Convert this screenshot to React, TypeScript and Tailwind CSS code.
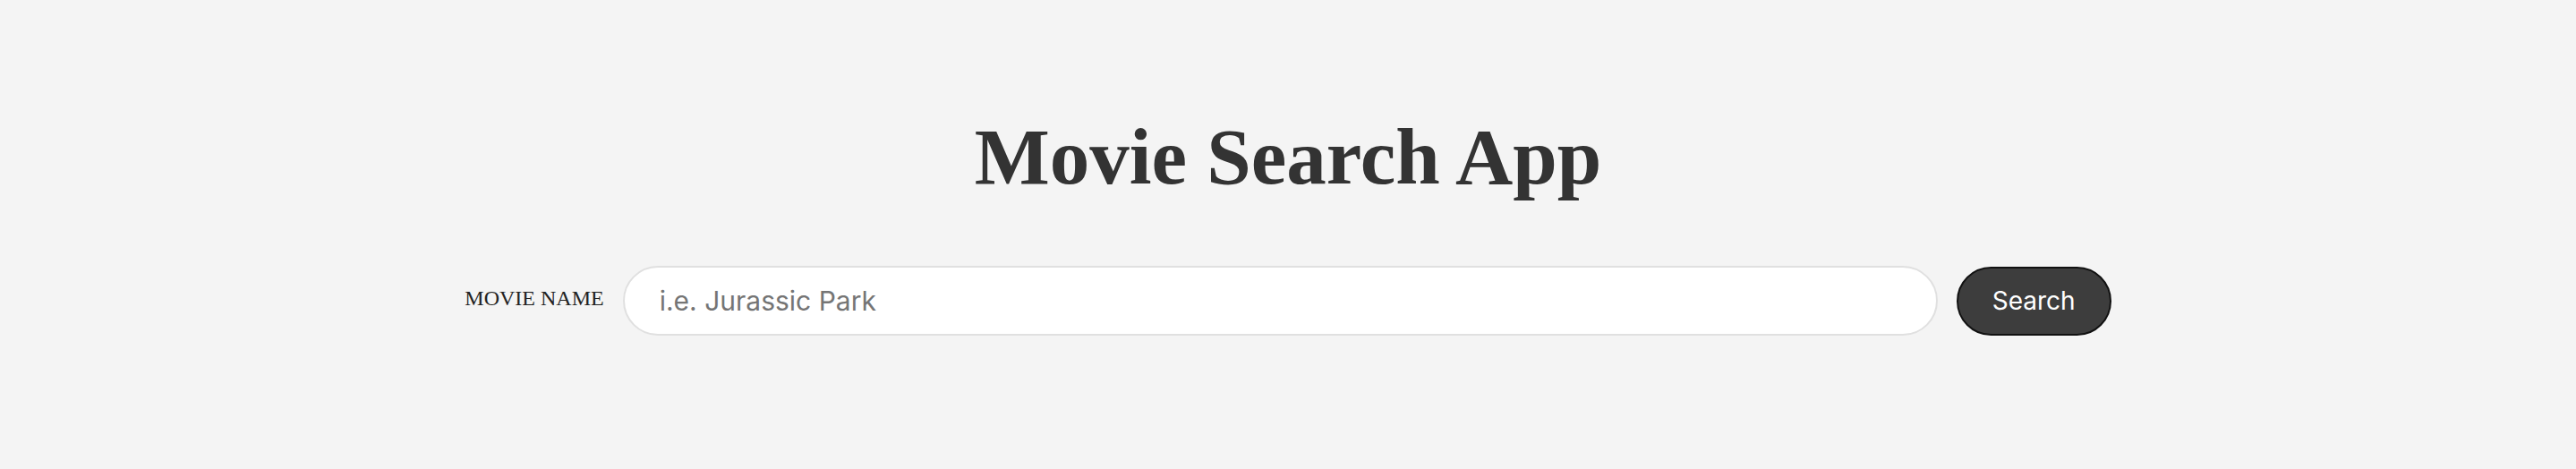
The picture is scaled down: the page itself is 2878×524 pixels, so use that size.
export default function App() {
  return (
    <div className="min-h-[524px] w-full bg-[#f4f4f4] pt-[126px]">
      <h1 className="text-center font-['Liberation_Serif',serif] text-[89px] font-bold leading-[99px] text-[#333]">
        Movie Search App
      </h1>
      <form
        className="mt-[72px] flex items-center justify-center gap-[21px]"
        onSubmit={(e) => e.preventDefault()}
      >
        <label
          htmlFor="movie"
          className="pb-[7px] font-['Liberation_Serif',serif] text-[24px] text-[#222]"
        >
          MOVIE NAME
        </label>
        <input
          id="movie"
          type="text"
          placeholder="i.e. Jurassic Park"
          className="h-[78px] w-[1469px] rounded-full border-2 border-[#e0e0e0] bg-white pl-[39px] font-['Inter',sans-serif] text-[30px] text-[#333] outline-none placeholder:text-[#757575]"
        />
        <button
          type="submit"
          className="h-[77px] w-[173px] rounded-full border-2 border-[#111] bg-[#3d3d3d] font-['Inter',sans-serif] text-[28px] text-white"
        >
          Search
        </button>
      </form>
    </div>
  );
}
